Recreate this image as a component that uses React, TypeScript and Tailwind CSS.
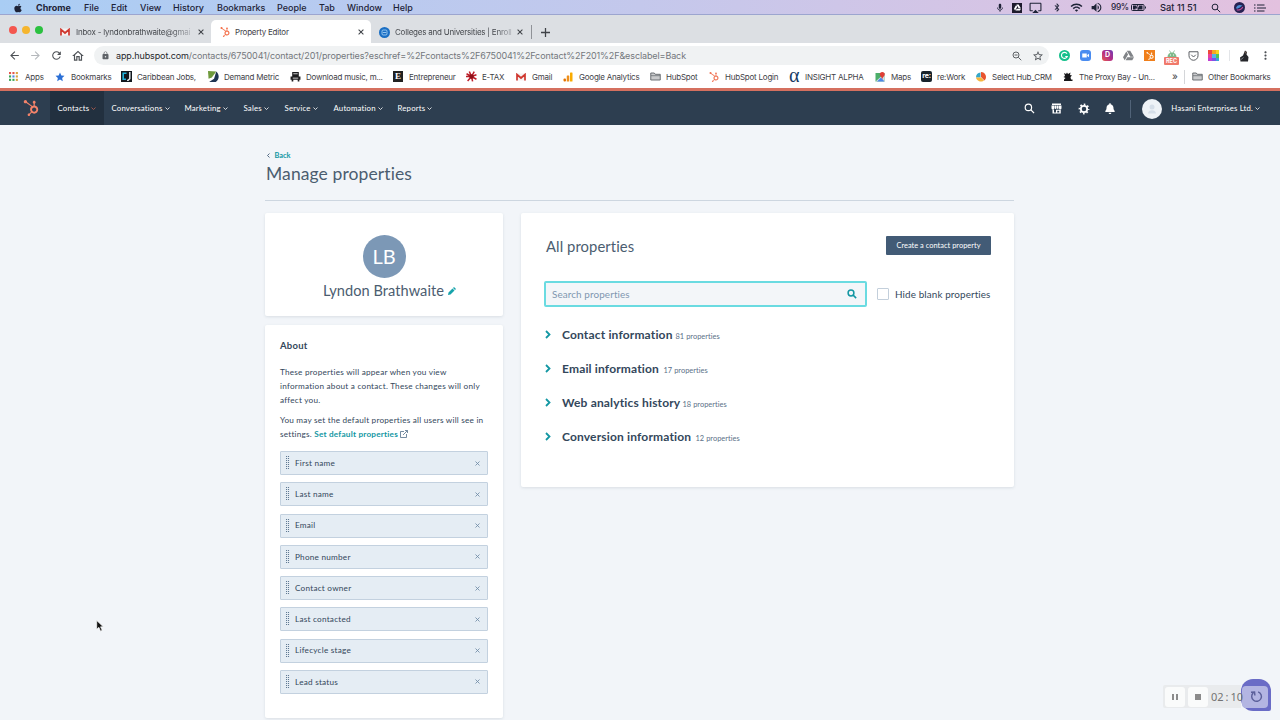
import type { ReactNode } from "react";
import {
  FaApple,
  FaBell,
  FaBluetoothB,
  FaGoogleDrive,
  FaHubspot
} from "react-icons/fa";
import {
  MdAirplay,
  MdArrowBack,
  MdArrowForward,
  MdLock,
  MdMic,
  MdMoreVert,
  MdOutlineHome,
  MdRefresh,
  MdStarBorder,
  MdVolumeUp,
  MdWifi
} from "react-icons/md";

interface BookmarkItem {
  label: string;
  icon: ReactNode;
  className: string;
}

interface LabelItem {
  label: string;
  className: string;
}

interface PropertyGroup {
  name: string;
  count: number;
  className: string;
}

const menuItems: LabelItem[] = [
  { label: "Chrome", className: "w-[48px] font-bold" },
  { label: "File", className: "w-[27px]" },
  { label: "Edit", className: "w-[29px]" },
  { label: "View", className: "w-[33px]" },
  { label: "History", className: "w-[44px]" },
  { label: "Bookmarks", className: "w-[60px]" },
  { label: "People", className: "w-[42px]" },
  { label: "Tab", className: "w-[28px]" },
  { label: "Window", className: "w-[46px]" },
  { label: "Help", className: "w-[30px]" }
];

const navItems: LabelItem[] = [
  { label: "Contacts", className: "w-[54px] bg-[#22303f]" },
  { label: "Conversations", className: "w-[73px]" },
  { label: "Marketing", className: "w-[59px]" },
  { label: "Sales", className: "w-[41px]" },
  { label: "Service", className: "w-[49px]" },
  { label: "Automation", className: "w-[64px]" },
  { label: "Reports", className: "w-[50px]" }
];

const aboutProperties = [
  "First name",
  "Last name",
  "Email",
  "Phone number",
  "Contact owner",
  "Last contacted",
  "Lifecycle stage",
  "Lead status"
];

const propertyGroups: PropertyGroup[] = [
  { name: "Contact information", count: 81, className: "w-[110px]" },
  { name: "Email information", count: 17, className: "w-[98px]" },
  { name: "Web analytics history", count: 18, className: "w-[117px]" },
  { name: "Conversion information", count: 12, className: "w-[130px]" }
];

function GmailIcon() {
  return (
    <svg viewBox="0 0 20 16" className="h-[8px] w-[10px]">
      <path d="M2 1h16v14H2z" fill="#f4f1f1" />
      <path d="M2 15V3l8 7 8-7v12" fill="none" stroke="#d0382f" strokeWidth="3.4" />
    </svg>
  );
}

function AppsIcon() {
  const colors = ["#e2574c", "#e2574c", "#d9a441", "#3aa757", "#4a84e8", "#d9a441", "#3aa757", "#3aa757", "#d9a441"];
  return (
    <svg viewBox="0 0 9 9" className="h-[9px] w-[9px]">
      {colors.map((color, i) => (
        <rect key={i} x={(i % 3) * 3.4} y={Math.floor(i / 3) * 3.4} width="2.1" height="2.1" fill={color} />
      ))}
    </svg>
  );
}

function FolderIcon() {
  return (
    <svg viewBox="0 0 22 18" className="h-[9px] w-[11px]">
      <path d="M1.5 2h7l2 2.6h10V16h-19z" fill="#c9cacc" stroke="#5f6368" strokeWidth="1.8" />
      <path d="M2 7.4h18" stroke="#5f6368" strokeWidth="1.4" />
    </svg>
  );
}

function SearchIcon({ className, weight = 2 }: { className: string; weight?: number }) {
  return (
    <svg viewBox="0 0 20 20" className={className} fill="none" stroke="currentColor" strokeWidth={weight}>
      <circle cx="8" cy="8" r="5.8" />
      <path d="M12.3 12.3l6 6" />
    </svg>
  );
}

function Caret({ className }: { className: string }) {
  return (
    <svg viewBox="0 0 10 6" className={className} fill="none" stroke="currentColor" strokeWidth="1.6">
      <path d="M1 1l4 4 4-4" />
    </svg>
  );
}

function Cross({ className }: { className: string }) {
  return (
    <svg viewBox="0 0 10 10" className={className} fill="none" stroke="currentColor" strokeWidth="1.7">
      <path d="M1 1l8 8M9 1L1 9" />
    </svg>
  );
}

function GearIcon() {
  return (
    <svg viewBox="0 0 22 22" className="h-[12px] w-[12px]" fill="none" stroke="currentColor">
      <circle cx="11" cy="11" r="5.8" strokeWidth="3.2" />
      <circle cx="11" cy="11" r="8.4" strokeWidth="3" strokeDasharray="3 3.6" strokeDashoffset="1.5" />
    </svg>
  );
}

function StoreIcon() {
  return (
    <svg viewBox="0 0 22 22" className="h-[11px] w-[11px]" fill="currentColor">
      <path d="M2 1h18v3H2zM1 5h5.4v5.4a2.7 2.7 0 01-5.4 0zM7.2 5H11v5.4a2 2 0 01-3.8 0zM11.8 5h3.4v5.4a2 2 0 01-3.4 0zM16 5h5v5.4a2.5 2.5 0 01-5 0z" />
      <path d="M3 13h3v6h4v-5.600h9.500V21H3zM12.500 15.500V19h4v-3.500z" fillRule="evenodd" />
    </svg>
  );
}

const bookmarks: BookmarkItem[] = [
  { label: "Apps", icon: <AppsIcon />, className: "w-[46px]" },
  {
    label: "Bookmarks",
    icon: (
      <svg viewBox="0 0 20 20" className="h-[10px] w-[10px]">
        <path d="M10 1l2.700 6 6.300.7-4.700 4.400 1.300 6.400L10 15.200l-5.600 3.300 1.300-6.400L1 7.700l6.300-.7z" fill="#2a6fd6" />
      </svg>
    ),
    className: "w-[66px]"
  },
  {
    label: "Caribbean Jobs,",
    icon: (
      <svg viewBox="0 0 20 20" className="h-[11px] w-[11px]">
        <path d="M0 0h20v20H0z" fill="#12181e" />
        <path d="M10 4H4v11h5" fill="none" stroke="#1fb4dd" strokeWidth="3" />
        <path d="M16 2v12l-3 3h-2" fill="none" stroke="#e8edf0" strokeWidth="2.600" />
      </svg>
    ),
    className: "w-[87px]"
  },
  {
    label: "Demand Metric",
    icon: (
      <svg viewBox="0 0 20 20" className="h-[11px] w-[11px]">
        <path d="M0 0l15 1-8 11-6 2z" fill="#6f9a3c" />
        <path d="M15 1c7 7 5 15-1 19H2l9-6z" fill="#1f3553" />
      </svg>
    ),
    className: "w-[82px]"
  },
  {
    label: "Download music, m...",
    icon: (
      <svg viewBox="0 0 20 20" className="h-[11px] w-[11px]">
        <path d="M4 2h12v8H4zM1 10h18v6H1zM3 16h3v3H3zM14 16h3v3h-3z" fill="#1d1d1f" />
        <path d="M6 5h8M5 13h10" stroke="#fff" strokeWidth="1.400" />
      </svg>
    ),
    className: "w-[103px]"
  },
  {
    label: "Entrepreneur",
    icon: (
      <span className="flex h-[11px] w-[10px] items-center justify-center bg-[#222] font-['Liberation_Serif'] text-[9px] font-bold text-white">
        E
      </span>
    ),
    className: "w-[73px]"
  },
  {
    label: "E-TAX",
    icon: (
      <svg viewBox="0 0 20 20" className="h-[11px] w-[11px]">
        <path d="M10 10L1 5M10 10L6 1M10 10l5-9M10 10l9-3M10 10l9 5M10 10l2 9M10 10l-7 8M10 10H0" stroke="#bd1f2a" strokeWidth="2.800" />
        <circle cx="10" cy="10" r="4" fill="#8e1119" />
      </svg>
    ),
    className: "w-[50px]"
  },
  { label: "Gmail", icon: <GmailIcon />, className: "w-[47px]" },
  {
    label: "Google Analytics",
    icon: (
      <svg viewBox="0 0 20 20" className="h-[10px] w-[10px]">
        <rect x="1" y="13" width="5" height="6" rx="2" fill="#e37400" />
        <rect x="7.500" y="7" width="5" height="12" rx="1" fill="#ef8f1a" />
        <rect x="14" y="1" width="5" height="18" rx="1" fill="#f9ab00" />
      </svg>
    ),
    className: "w-[87px]"
  },
  { label: "HubSpot", icon: <FolderIcon />, className: "w-[59px]" },
  {
    label: "HubSpot Login",
    icon: <FaHubspot className="h-[10px] w-[10px] text-[#f07a5c]" />,
    className: "w-[80px]"
  },
  {
    label: "INSIGHT ALPHA",
    icon: (
      <span className="-mt-[3px] font-['Liberation_Serif'] text-[20px] leading-[11px] text-[#163a63]">α</span>
    ),
    className: "w-[86px]"
  },
  {
    label: "Maps",
    icon: (
      <svg viewBox="0 0 20 20" className="h-[10px] w-[10px]">
        <path d="M1 2h18v17H1z" fill="#4caf6a" />
        <path d="M1 19L19 3v16z" fill="#d7dde2" />
        <path d="M4 19l8-8 7 8z" fill="#4b87e8" />
        <path d="M14.500 0a5 5 0 015 5c0 3-3.500 4-5 9-1.500-5-5-6-5-9a5 5 0 015-5z" fill="#df3e35" />
      </svg>
    ),
    className: "w-[46px]"
  },
  {
    label: "re:Work",
    icon: (
      <span className="flex h-[11px] w-[11px] items-center justify-center rounded-[2px] bg-[#17232b] text-[7px] font-bold text-white">
        re:
      </span>
    ),
    className: "w-[55px]"
  },
  {
    label: "Select Hub_CRM",
    icon: (
      <svg viewBox="0 0 20 20" className="h-[10px] w-[10px]">
        <path d="M9 11V1a10 10 0 00-9 10z" fill="#35a7c9" />
        <path d="M10 10V0a10 10 0 017 17z" fill="#e8542f" />
        <path d="M0 11h10l6 6a10 10 0 01-16-6z" fill="#f5b63d" />
      </svg>
    ),
    className: "w-[87px]"
  },
  {
    label: "The Proxy Bay - Un...",
    icon: (
      <svg viewBox="0 0 20 20" className="h-[10px] w-[10px]">
        <path d="M2 2l4 2 2-3 2 3 5-3-1 5 4 1-3 3 1 5h3v3H2v-3l3-3-4-2 3-2z" fill="#18181a" />
      </svg>
    ),
    className: "w-[109px]"
  }
];

function MenuBar() {
  return (
    <div className="flex h-[15px] items-center border-b border-[#9ca5cf] bg-linear-to-r from-[#a9cdf4] via-[#c4c8ec] via-50% to-[#e3c1df] pt-px font-[Inter,sans-serif] text-[9px] font-medium text-[#1d2236]">
      <div className="flex w-[36px] shrink-0 justify-end pr-[13px]">
        <FaApple className="h-[10px] w-[10px]" />
      </div>
      {menuItems.map(item => (
        <span key={item.label} className={`shrink-0 whitespace-nowrap ${item.className}`}>
          {item.label}
        </span>
      ))}
      <div className="ml-auto flex items-center pr-[14px]">
        <MdMic className="mr-[7px] h-[10px] w-[10px]" />
        <span className="mr-[7px] flex h-[10px] w-[10px] items-center justify-center bg-[#1d1a2c] text-white">
          <FaGoogleDrive className="h-[7px] w-[7px]" />
        </span>
        <MdAirplay className="mr-[11px] h-[13px] w-[13px]" />
        <FaBluetoothB className="mr-[9px] h-[9px] w-[8px]" />
        <MdWifi className="mr-[7px] h-[13px] w-[13px]" />
        <MdVolumeUp className="mr-[8px] h-[13px] w-[13px]" />
        <span className="w-[20px] text-[8.300px] tracking-[-0.300px] whitespace-nowrap">99%</span>
        <svg viewBox="0 0 30 14" className="mr-[14px] h-[7px] w-[15px]">
          <rect x="1" y="1" width="25" height="12" rx="2" fill="none" stroke="currentColor" strokeWidth="2" />
          <path d="M4 3h7l-2 8H4zM16 3h7v8h-9zM28 5h2v4h-2z" fill="currentColor" />
          <path d="M14 2l-4 6h6l-3 5" fill="none" stroke="currentColor" strokeWidth="2" />
        </svg>
        <span className="w-[51px] text-[9.300px] whitespace-nowrap">Sat 11 51</span>
        <SearchIcon className="mr-[13px] h-[10px] w-[10px]" />
        <svg viewBox="0 0 20 20" className="mr-[9px] h-[11px] w-[11px]">
          <circle cx="10" cy="10" r="10" fill="#272252" />
          <path d="M4 10c3-6 8-5 12-3-4 0-6 6-12 5z" fill="#4d8fd6" />
          <path d="M5 14c4 2 9-1 11-5" fill="none" stroke="#c54f9f" strokeWidth="2" />
        </svg>
        <svg viewBox="0 0 24 16" className="h-[8px] w-[12px]" stroke="currentColor" strokeWidth="2">
          <path d="M0 2h3M6 2h15M0 8h3M6 8h18M0 14h3M6 14h15" />
        </svg>
      </div>
    </div>
  );
}

function TabStrip() {
  return (
    <div className="flex h-[28px] items-end bg-[#dcdfe3] font-[Inter,sans-serif] text-[8px] tracking-[-0.220px] text-[#3f4247]">
      <div className="flex h-[28px] w-[60px] shrink-0 items-center gap-[5px] pt-px pl-[9px]">
        <span className="h-[8px] w-[8px] rounded-full bg-[#f4574f]" />
        <span className="h-[8px] w-[8px] rounded-full bg-[#f5b52e]" />
        <span className="h-[8px] w-[8px] rounded-full bg-[#2bc140]" />
      </div>
      <div className="flex h-[23px] w-[151px] items-center pt-px">
        <GmailIcon />
        <span className="ml-[6px] w-[116px] bg-linear-to-r from-[#3f4247] from-80% to-[#b9bcc2] bg-clip-text whitespace-nowrap text-transparent">
          Inbox - lyndonbrathwaite@gmai
        </span>
        <Cross className="ml-[6px] h-[6px] w-[6px]" />
      </div>
      <div className="flex h-[23px] w-[160px] items-center rounded-t-[5px] bg-white pt-px pl-[9px]">
        <FaHubspot className="h-[10px] w-[10px] text-[#f4744f]" />
        <span className="ml-[5px] w-[123px] whitespace-nowrap">Property Editor</span>
        <Cross className="h-[6px] w-[6px]" />
      </div>
      <div className="flex h-[23px] w-[160px] items-center pt-px pl-[8px]">
        <svg viewBox="0 0 20 20" className="h-[11px] w-[11px]">
          <circle cx="10" cy="10" r="10" fill="#1b6fc4" />
          <rect x="5.500" y="5.500" width="9" height="9" rx="2" fill="none" stroke="#a6d1f5" strokeWidth="1.600" />
          <path d="M7 10h6" stroke="#a6d1f5" strokeWidth="1.600" />
        </svg>
        <span className="ml-[5px] w-[118px] bg-linear-to-r from-[#3f4247] from-85% to-[#b9bcc2] bg-clip-text whitespace-nowrap text-transparent">
          Colleges and Universities | Enroll
        </span>
        <Cross className="ml-[4px] h-[6px] w-[6px]" />
      </div>
      <div className="mb-[4px] flex h-[14px] items-center border-l border-[#8f9297] pl-[9px]">
        <svg viewBox="0 0 10 10" className="h-[9px] w-[9px]" stroke="currentColor" strokeWidth="1.400">
          <path d="M5 0v10M0 5h10" />
        </svg>
      </div>
    </div>
  );
}

function Toolbar() {
  return (
    <div className="flex h-[23px] items-center bg-white pt-[2px] text-[#4d5156]">
      <div className="flex w-[94px] items-center gap-[8px] pl-[8px]">
        <MdArrowBack className="h-[13px] w-[13px]" />
        <MdArrowForward className="h-[13px] w-[13px] text-[#b5b8bc]" />
        <MdRefresh className="h-[13px] w-[13px]" />
        <MdOutlineHome className="h-[14px] w-[14px]" />
      </div>
      <div className="flex h-[19px] w-[955px] shrink-0 items-center rounded-full bg-[#f0f2f3] pr-[5px] pl-[7px]">
        <MdLock className="h-[9px] w-[9px] text-[#5f6368]" />
        <span className="ml-[6px] font-[Inter,sans-serif] text-[9px] tracking-[-0.110px] whitespace-nowrap text-[#73777c]">
          <span className="text-[#26282b]">app.hubspot.com</span>
          /contacts/6750041/contact/201/properties?eschref=%2Fcontacts%2F6750041%2Fcontact%2F201%2F&amp;esclabel=Back
        </span>
        <svg viewBox="0 0 20 20" className="ml-auto h-[10px] w-[10px]" fill="none" stroke="currentColor" strokeWidth="1.800">
          <circle cx="8" cy="8" r="6" />
          <path d="M12.500 12.500l6 6M5 8h6" />
        </svg>
        <MdStarBorder className="ml-[10px] h-[12px] w-[12px]" />
      </div>
      <div className="flex flex-1 items-center pl-[10px]">
        <svg viewBox="0 0 22 22" className="mr-[10px] h-[11px] w-[11px]">
          <circle cx="11" cy="11" r="11" fill="#16c08c" />
          <path d="M16 7.500A6 6 0 1016.500 13H12.500" fill="none" stroke="#fff" strokeWidth="2.200" />
        </svg>
        <svg viewBox="0 0 22 22" className="mr-[11px] h-[11px] w-[11px]">
          <rect width="22" height="22" rx="6" fill="#4a8cf0" />
          <path d="M4.500 7h9v8h-9zM14.500 10l3.500-2.500v7L14.500 12z" fill="#fff" />
        </svg>
        <span className="mr-[10px] flex h-[11px] w-[11px] items-center justify-center rounded-[3px] bg-linear-to-tr from-[#e9563f] via-[#b32a87] to-[#6d36b5] font-[Inter,sans-serif] text-[7px] font-bold text-white">
          D
        </span>
        <FaGoogleDrive className="mr-[10px] h-[11px] w-[11px] text-[#808387]" />
        <span className="mr-[9px] flex h-[11px] w-[11px] items-center justify-center bg-[#f07f1b] text-white">
          <FaHubspot className="h-[8px] w-[8px]" />
        </span>
        <span className="mr-[9px] flex h-[19px] w-[15px] flex-col items-center pt-[4px]">
          <svg viewBox="0 0 20 14" className="h-[7px] w-[10px]">
            <path d="M1 14a9 9 0 0118 0z" fill="#7fb98a" />
            <path d="M5 1l3 5M15 1l-3 5" stroke="#7fb98a" strokeWidth="1.600" />
            <path d="M6 10h2M12 10h2" stroke="#fff" strokeWidth="2" />
          </svg>
          <span className="flex h-[8px] w-[15px] items-center justify-center rounded-[1px] bg-[#f0796a] font-[Inter,sans-serif] text-[5.500px] font-bold text-white">
            REC
          </span>
        </span>
        <svg viewBox="0 0 22 20" className="mr-[9px] h-[10px] w-[11px]" fill="none" stroke="#5c5f64" strokeWidth="2">
          <path d="M2 1.500h18v8a9 9 0 01-18 0z" />
          <path d="M6.500 7.500L11 12l4.500-4.500" />
        </svg>
        <svg viewBox="0 0 11 11" className="mr-[10px] h-[11px] w-[11px]">
          <path d="M0 0h4v4H0z" fill="#ee4a3a" />
          <path d="M4 0h4v4H4z" fill="#f5a623" />
          <path d="M8 0h3v4H8z" fill="#f8d71c" />
          <path d="M0 4h4v4H0z" fill="#e8439a" />
          <path d="M4 4h4v4H4z" fill="#52b6e8" />
          <path d="M8 4h3v4H8z" fill="#51c553" />
          <path d="M0 8h4v3H0z" fill="#c03fd1" />
          <path d="M4 8h4v3H4z" fill="#7a55e8" />
          <path d="M8 8h3v3H8z" fill="#3aa4d8" />
        </svg>
        <span className="mr-[9px] h-[11px] w-px bg-[#e3e5e8]" />
        <svg viewBox="0 0 20 24" className="mr-[10px] h-[12px] w-[10px]">
          <path d="M12 1l4 3-1 5 4 5-1 9H3l-1-8 6-4z" fill="#25262b" />
          <circle cx="13" cy="5" r="2" fill="#6d5a52" />
          <path d="M4 19l5-4" stroke="#9298a0" strokeWidth="1.600" />
        </svg>
        <MdMoreVert className="h-[13px] w-[13px]" />
      </div>
    </div>
  );
}

function BookmarksBar() {
  return (
    <div className="flex h-[22px] items-center bg-white pb-px pl-[9px] font-[Inter,sans-serif] text-[8px] tracking-[-0.220px] text-[#3f4247]">
      {bookmarks.map(item => (
        <div key={item.label} className={`flex shrink-0 items-center ${item.className}`}>
          <span className="flex w-[16px] shrink-0 items-center">{item.icon}</span>
          <span className="whitespace-nowrap">{item.label}</span>
        </div>
      ))}
      <span className="w-[12px] text-[10px]">»</span>
      <div className="flex h-[14px] items-center border-l border-[#d4d6d9] pl-[7px]">
        <FolderIcon />
        <span className="ml-[5px] whitespace-nowrap">Other Bookmarks</span>
      </div>
    </div>
  );
}

function HubSpotNav() {
  return (
    <nav className="flex h-[37px] items-stretch border-t-[3px] border-[#d5705f] bg-[#2d3e50] font-[Lato,sans-serif] text-[7.800px] tracking-[0.180px] text-white">
      <div className="flex w-[50px] shrink-0 items-center pl-[23px] text-[#f4836a]">
        <FaHubspot className="h-[16px] w-[16px]" />
      </div>
      {navItems.map((item, i) => (
        <div key={item.label} className={`flex shrink-0 items-center pt-px pl-[7.500px] ${item.className}`}>
          <span className="whitespace-nowrap">{item.label}</span>
          <Caret className={i === 0 ? "ml-[2px] h-[3px] w-[5px] text-[#c0614f]" : "ml-[2px] h-[3px] w-[5px]"} />
        </div>
      ))}
      <div className="ml-auto flex items-center pt-px">
        <SearchIcon className="mr-[16px] h-[11px] w-[11px]" weight={2.2} />
        <span className="mr-[16px]">
          <StoreIcon />
        </span>
        <span className="mr-[15px]">
          <GearIcon />
        </span>
        <FaBell className="mr-[15px] h-[11px] w-[10px]" />
        <span className="mr-[11px] h-[18px] w-px bg-[#516378]" />
        <span className="mr-[9px] flex h-[20px] w-[20px] items-center justify-center rounded-full bg-[#eef2f6]">
          <svg viewBox="0 0 20 20" className="h-[10px] w-[10px]" fill="#d5dee8">
            <circle cx="10" cy="6" r="5" />
            <path d="M2 19c0-9 16-9 16 0z" />
          </svg>
        </span>
        <span className="tracking-[0.150px] whitespace-nowrap">Hasani Enterprises Ltd.</span>
        <Caret className="mr-[20px] ml-[2px] h-[3px] w-[5px]" />
      </div>
    </nav>
  );
}

function DragHandle() {
  return (
    <svg viewBox="0 0 4 14" className="h-[14px] w-[4px]" stroke="#5f7993" strokeWidth="1.100" strokeDasharray="1 1">
      <path d="M.5 0v14M2.500 0v14" />
    </svg>
  );
}

function ContactCard() {
  return (
    <section className="flex h-[103px] flex-col items-center rounded-[2px] bg-white pt-[22px] shadow-[0_1px_3px_rgba(45,62,80,0.12)]">
      <div className="flex h-[43px] w-[43px] items-center justify-center rounded-full bg-[#7c98b6] pb-px text-[20px] text-white">
        LB
      </div>
      <div className="ml-[11px] flex items-center pt-[3px]">
        <span className="text-[14.600px] leading-[20px] tracking-[0.050px] whitespace-nowrap text-[#4b5d70]">
          Lyndon Brathwaite
        </span>
        <svg viewBox="0 0 16 16" className="ml-[4px] h-[8px] w-[8px]" fill="#16a3ab">
          <path d="M0 16l1-5 8-8 4 4-8 8zM10 2l2-2 4 4-2 2z" />
        </svg>
      </div>
    </section>
  );
}

function AboutCard() {
  return (
    <section className="mt-[9px] h-[393px] rounded-[2px] bg-white px-[15px] pt-[14px] shadow-[0_1px_3px_rgba(45,62,80,0.12)]">
      <h2 className="text-[9.500px] leading-[14px] font-bold tracking-[0.250px]">About</h2>
      <p className="mt-[12px] text-[8.200px] leading-[14px] tracking-[0.230px] whitespace-nowrap">
        These properties will appear when you view
        <br />
        information about a contact. These changes will only
        <br />
        affect you.
      </p>
      <p className="mt-[6px] text-[8.200px] leading-[14px] tracking-[0.215px] whitespace-nowrap">
        You may set the default properties all users will see in
        <br />
        settings. <span className="font-bold text-[#1397a3]">Set default properties</span>
        <svg viewBox="0 0 16 16" className="ml-[2px] inline-block h-[8px] w-[8px] align-[-1px]" fill="none" stroke="#5d7891" strokeWidth="1.700">
          <path d="M8 3H1v12h12V8M6 10l9-9M10 1h5v5" />
        </svg>
      </p>
      <ul className="mt-[10px] flex flex-col gap-[7.250px]">
        {aboutProperties.map(name => (
          <li
            key={name}
            className="flex h-[24px] items-center rounded-[1px] border border-[#c3d1df] bg-[#e5edf4] pr-[7px] pl-[5px]">
            <DragHandle />
            <span className="ml-[5px] text-[8.200px] tracking-[0.230px] whitespace-nowrap">{name}</span>
            <Cross className="ml-auto h-[5px] w-[5px] text-[#6f8aa5]" />
          </li>
        ))}
      </ul>
    </section>
  );
}

function AllPropertiesCard() {
  return (
    <section className="h-[274px] w-[493px] rounded-[2px] bg-white pr-[23px] pl-[24px] shadow-[0_1px_3px_rgba(45,62,80,0.12)]">
      <div className="flex items-start justify-between pt-[23px]">
        <h2 className="ml-px text-[14.800px] leading-[20px] tracking-[0.080px] whitespace-nowrap text-[#4b5d70]">
          All properties
        </h2>
        <button className="flex h-[19px] w-[105px] items-center justify-center rounded-[1px] bg-[#425b76] text-[7.400px] tracking-[0.040px] whitespace-nowrap text-white">
          Create a contact property
        </button>
      </div>
      <div className="mt-[25px] flex items-center">
        <div className="-ml-px flex h-[26px] w-[323px] items-center justify-between rounded-[2px] border-2 border-[#6adbe1] bg-[#f3f6f9] pr-[8px] pl-[6px]">
          <span className="text-[9.900px] tracking-[0.110px] whitespace-nowrap text-[#8097b0]">Search properties</span>
          <SearchIcon className="h-[10px] w-[10px] text-[#1397a3]" weight={3} />
        </div>
        <span className="ml-[10px] h-[12px] w-[12px] rounded-[1px] border border-[#c3cfdb] bg-white" />
        <span className="ml-[6px] pt-px text-[9.900px] tracking-[0.110px] whitespace-nowrap">Hide blank properties</span>
      </div>
      <ul className="mt-[10.500px]">
        {propertyGroups.map(group => (
          <li key={group.name} className="flex h-[34px] items-center">
            <svg viewBox="0 0 12 18" className="h-[9px] w-[6px]" fill="none" stroke="#1397a3" strokeWidth="3.600">
              <path d="M2 2l7 7-7 7" />
            </svg>
            <span className="flex items-baseline pl-[11px]">
              <span className={`text-[12px] font-bold tracking-[0.160px] whitespace-nowrap ${group.className}`}>
                {group.name}
              </span>
              <span className="ml-[3.500px] text-[7.450px] tracking-[0.030px] whitespace-nowrap text-[#5b7088]">
                {group.count} properties
              </span>
            </span>
          </li>
        ))}
      </ul>
    </section>
  );
}

function Recorder() {
  return (
    <div className="absolute top-[679px] left-[1163px] flex h-[32px] w-[108px] items-center">
      <div className="mt-[3px] flex h-[23px] w-[78px] items-center gap-[3px] rounded-l-[2px] bg-[#e9ebed] pl-[2px]">
        <span className="flex h-[20px] w-[20px] items-center justify-center gap-[2px] rounded-[3px] bg-[#fafbfb]">
          <span className="h-[6px] w-[2px] bg-[#8b8b8b]" />
          <span className="h-[6px] w-[2px] bg-[#8b8b8b]" />
        </span>
        <span className="flex h-[20px] w-[20px] items-center justify-center rounded-[3px] bg-[#fafbfb]">
          <span className="h-[6px] w-[6px] bg-[#8b8b8b]" />
        </span>
      </div>
      <div className="flex h-[32px] w-[30px] items-center justify-end rounded-[12px] rounded-br-[2px] bg-[#6a6cc6] pt-[3px] pr-[3px]">
        <span className="flex h-[22px] w-[26px] items-center justify-center rounded-[4px] bg-[#b3b5e2]">
          <svg viewBox="0 0 20 20" className="ml-[3px] h-[13px] w-[13px]" fill="none" stroke="#5c609a" strokeWidth="2.200">
            <path d="M12.500 2.800A7.500 7.500 0 115 4.400" />
            <path d="M1.500 3.500l5.500-.5.500 5.500" />
          </svg>
        </span>
      </div>
      <span className="absolute top-[10px] left-[48px] flex font-['Noto_Sans',sans-serif] text-[11px] leading-[15px] whitespace-nowrap text-[#737373]">
        02<span className="mx-[2px]">:</span>10
      </span>
    </div>
  );
}

export default function App() {
  return (
    <div className="relative flex h-[720px] w-[1280px] flex-col overflow-hidden bg-[#f2f5f9]">
      <MenuBar />
      <TabStrip />
      <Toolbar />
      <BookmarksBar />
      <HubSpotNav />
      <main className="ml-[265px] w-[749px] font-[Lato,sans-serif] text-[#33475b]">
        <div className="flex h-[60px] items-center pt-px text-[7.400px] font-bold text-[#1397a3]">
          <svg viewBox="0 0 6 10" className="ml-[2px] h-[5px] w-[3px]" fill="none" stroke="#425b76" strokeWidth="1.800">
            <path d="M5 1L1 5l4 4" />
          </svg>
          <span className="ml-[4.500px]">Back</span>
        </div>
        <div className="-mt-[22px] flex h-[38px] items-start border-b border-[#cdd6e0] pl-px">
          <h1 className="text-[17.500px] leading-[22px] tracking-[0.100px] whitespace-nowrap text-[#4b5d70]">
            Manage properties
          </h1>
        </div>
        <div className="mt-[12px] flex items-start gap-[18px]">
          <div className="w-[238px] shrink-0">
            <ContactCard />
            <AboutCard />
          </div>
          <AllPropertiesCard />
        </div>
      </main>
      <Recorder />
      <svg viewBox="0 0 14 22" className="absolute top-[620px] left-[96px] h-[12px] w-[8px]">
        <path d="M1 1v16l4-3.500 3 7 3-1.500-3-6.500h5z" fill="#111" stroke="#fff" strokeWidth="1.200" />
      </svg>
    </div>
  );
}
